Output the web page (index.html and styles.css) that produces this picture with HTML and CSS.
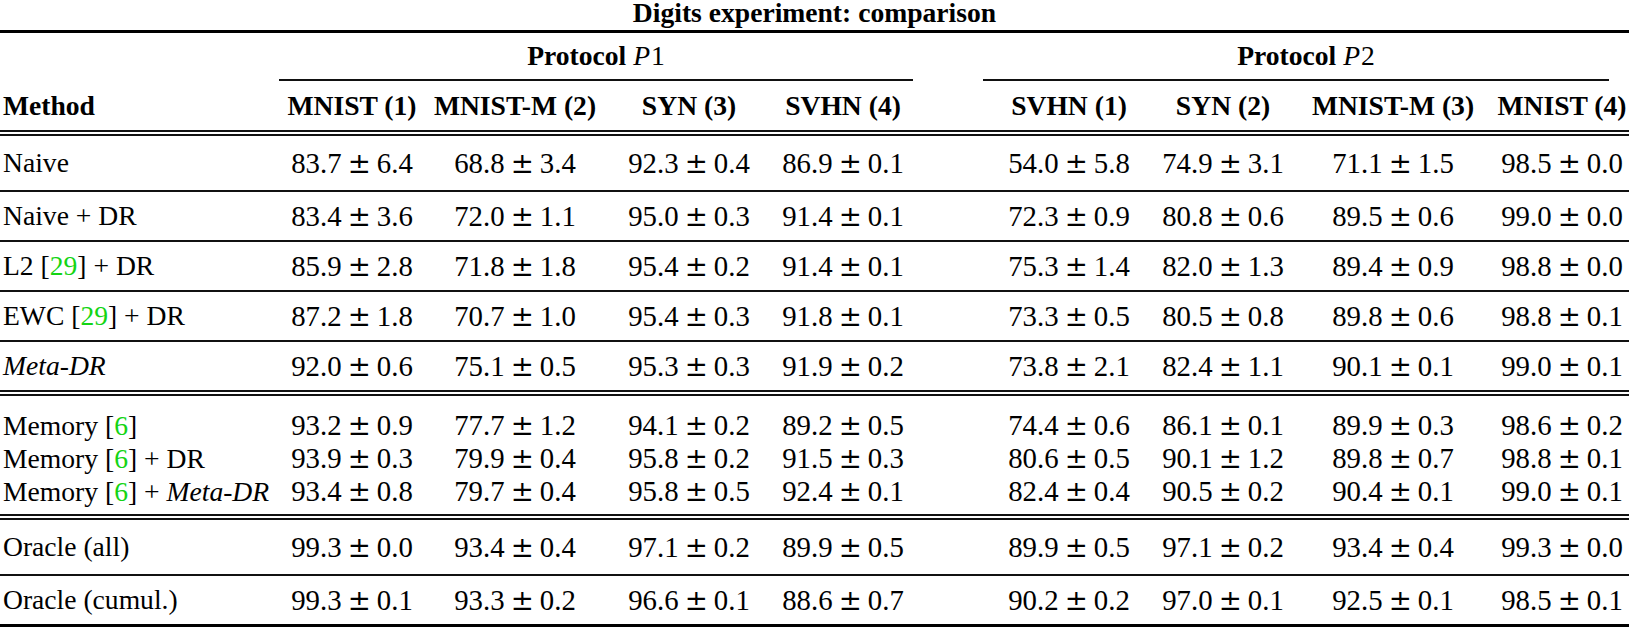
FILE: index.html
```html
<!DOCTYPE html>
<html>
<head>
<meta charset="utf-8">
<link rel="stylesheet" href="styles.css">
</head>
<body>
<div class="tbl">
  <div class="caption">Digits experiment: comparison</div>
  <div class="rule-heavy"></div>

  <div class="row head1">
    <div class="m"></div>
    <div class="grp p1">Protocol&nbsp;<span class="mi">P</span><span class="mn">1</span></div>
    <div class="gap"></div>
    <div class="grp p2">Protocol&nbsp;<span class="mi">P</span><span class="mn">2</span></div>
  </div>

  <div class="row head2">
    <div class="m">Method</div>
    <div>MNIST (1)</div>
    <div>MNIST-M (2)</div>
    <div>SYN (3)</div>
    <div>SVHN (4)</div>
    <div class="gap"></div>
    <div>SVHN (1)</div>
    <div>SYN (2)</div>
    <div>MNIST-M (3)</div>
    <div>MNIST (4)</div>
  </div>

  <div class="dbl"></div>

  <div class="row data tall line">
    <div class="m">Naive</div>
    <div>83.7<span class="pm">±</span>6.4</div>
    <div>68.8<span class="pm">±</span>3.4</div>
    <div>92.3<span class="pm">±</span>0.4</div>
    <div>86.9<span class="pm">±</span>0.1</div>
    <div class="gap"></div>
    <div>54.0<span class="pm">±</span>5.8</div>
    <div>74.9<span class="pm">±</span>3.1</div>
    <div>71.1<span class="pm">±</span>1.5</div>
    <div>98.5<span class="pm">±</span>0.0</div>
  </div>

  <div class="row data line">
    <div class="m">Naive + DR</div>
    <div>83.4<span class="pm">±</span>3.6</div>
    <div>72.0<span class="pm">±</span>1.1</div>
    <div>95.0<span class="pm">±</span>0.3</div>
    <div>91.4<span class="pm">±</span>0.1</div>
    <div class="gap"></div>
    <div>72.3<span class="pm">±</span>0.9</div>
    <div>80.8<span class="pm">±</span>0.6</div>
    <div>89.5<span class="pm">±</span>0.6</div>
    <div>99.0<span class="pm">±</span>0.0</div>
  </div>

  <div class="row data line">
    <div class="m">L2 [<span class="cite">29</span>] + DR</div>
    <div>85.9<span class="pm">±</span>2.8</div>
    <div>71.8<span class="pm">±</span>1.8</div>
    <div>95.4<span class="pm">±</span>0.2</div>
    <div>91.4<span class="pm">±</span>0.1</div>
    <div class="gap"></div>
    <div>75.3<span class="pm">±</span>1.4</div>
    <div>82.0<span class="pm">±</span>1.3</div>
    <div>89.4<span class="pm">±</span>0.9</div>
    <div>98.8<span class="pm">±</span>0.0</div>
  </div>

  <div class="row data line">
    <div class="m">EWC [<span class="cite">29</span>] + DR</div>
    <div>87.2<span class="pm">±</span>1.8</div>
    <div>70.7<span class="pm">±</span>1.0</div>
    <div>95.4<span class="pm">±</span>0.3</div>
    <div>91.8<span class="pm">±</span>0.1</div>
    <div class="gap"></div>
    <div>73.3<span class="pm">±</span>0.5</div>
    <div>80.5<span class="pm">±</span>0.8</div>
    <div>89.8<span class="pm">±</span>0.6</div>
    <div>98.8<span class="pm">±</span>0.1</div>
  </div>

  <div class="row data">
    <div class="m"><i>Meta-DR</i></div>
    <div>92.0<span class="pm">±</span>0.6</div>
    <div>75.1<span class="pm">±</span>0.5</div>
    <div>95.3<span class="pm">±</span>0.3</div>
    <div>91.9<span class="pm">±</span>0.2</div>
    <div class="gap"></div>
    <div>73.8<span class="pm">±</span>2.1</div>
    <div>82.4<span class="pm">±</span>1.1</div>
    <div>90.1<span class="pm">±</span>0.1</div>
    <div>99.0<span class="pm">±</span>0.1</div>
  </div>

  <div class="dbl"></div>

  <div class="group">
    <div class="row data compact">
      <div class="m">Memory [<span class="cite">6</span>]</div>
      <div>93.2<span class="pm">±</span>0.9</div>
      <div>77.7<span class="pm">±</span>1.2</div>
      <div>94.1<span class="pm">±</span>0.2</div>
      <div>89.2<span class="pm">±</span>0.5</div>
      <div class="gap"></div>
      <div>74.4<span class="pm">±</span>0.6</div>
      <div>86.1<span class="pm">±</span>0.1</div>
      <div>89.9<span class="pm">±</span>0.3</div>
      <div>98.6<span class="pm">±</span>0.2</div>
    </div>
    <div class="row data compact">
      <div class="m">Memory [<span class="cite">6</span>] + DR</div>
      <div>93.9<span class="pm">±</span>0.3</div>
      <div>79.9<span class="pm">±</span>0.4</div>
      <div>95.8<span class="pm">±</span>0.2</div>
      <div>91.5<span class="pm">±</span>0.3</div>
      <div class="gap"></div>
      <div>80.6<span class="pm">±</span>0.5</div>
      <div>90.1<span class="pm">±</span>1.2</div>
      <div>89.8<span class="pm">±</span>0.7</div>
      <div>98.8<span class="pm">±</span>0.1</div>
    </div>
    <div class="row data compact">
      <div class="m">Memory [<span class="cite">6</span>] + <i>Meta-DR</i></div>
      <div>93.4<span class="pm">±</span>0.8</div>
      <div>79.7<span class="pm">±</span>0.4</div>
      <div>95.8<span class="pm">±</span>0.5</div>
      <div>92.4<span class="pm">±</span>0.1</div>
      <div class="gap"></div>
      <div>82.4<span class="pm">±</span>0.4</div>
      <div>90.5<span class="pm">±</span>0.2</div>
      <div>90.4<span class="pm">±</span>0.1</div>
      <div>99.0<span class="pm">±</span>0.1</div>
    </div>
  </div>

  <div class="dbl"></div>

  <div class="row data tall line">
    <div class="m">Oracle (all)</div>
    <div>99.3<span class="pm">±</span>0.0</div>
    <div>93.4<span class="pm">±</span>0.4</div>
    <div>97.1<span class="pm">±</span>0.2</div>
    <div>89.9<span class="pm">±</span>0.5</div>
    <div class="gap"></div>
    <div>89.9<span class="pm">±</span>0.5</div>
    <div>97.1<span class="pm">±</span>0.2</div>
    <div>93.4<span class="pm">±</span>0.4</div>
    <div>99.3<span class="pm">±</span>0.0</div>
  </div>

  <div class="row data">
    <div class="m">Oracle (cumul.)</div>
    <div>99.3<span class="pm">±</span>0.1</div>
    <div>93.3<span class="pm">±</span>0.2</div>
    <div>96.6<span class="pm">±</span>0.1</div>
    <div>88.6<span class="pm">±</span>0.7</div>
    <div class="gap"></div>
    <div>90.2<span class="pm">±</span>0.2</div>
    <div>97.0<span class="pm">±</span>0.1</div>
    <div>92.5<span class="pm">±</span>0.1</div>
    <div>98.5<span class="pm">±</span>0.1</div>
  </div>

  <div class="rule-heavy"></div>
</div>
</body>
</html>
```

FILE: styles.css
```css
html, body {
  margin: 0;
  padding: 0;
  background: #ffffff;
}

body {
  font-family: "Liberation Serif", "Times New Roman", serif;
  font-size: 27.6px;
  color: #000000;
}

.tbl {
  width: 1629px;
}

.caption {
  height: 30px;
  line-height: 25px;
  text-align: center;
  font-weight: bold;
  white-space: nowrap;
}

.rule-heavy {
  height: 3px;
  background: #000000;
}

.row {
  display: grid;
  grid-template-columns: 279px 146px 180px 168px 140px 70px 172px 136px 204px 134px;
  align-items: center;
  text-align: center;
  white-space: nowrap;
  box-sizing: border-box;
}

.row > .m {
  text-align: left;
  padding-left: 3px;
}

.head1 {
  height: 48px;
  align-items: stretch;
}

.grp {
  display: flex;
  align-items: center;
  justify-content: center;
  font-weight: bold;
  border-bottom: 2px solid #111111;
}

.p1 {
  grid-column: 2 / 6;
}

.p2 {
  grid-column: 7 / 11;
  margin-right: 20px;
  padding-left: 20px;
}

.mi {
  font-style: italic;
  font-weight: normal;
  margin-right: 0.04em;
}

.mn {
  font-weight: normal;
}

.head2 {
  height: 49px;
  font-weight: bold;
}

.dbl {
  height: 6px;
  box-sizing: border-box;
  border-top: 2px solid #111111;
  border-bottom: 2px solid #111111;
}

.data {
  height: 48px;
}

.data > div:not(.m) {
  font-size: 28.8px;
}

.data.line {
  height: 50px;
  border-bottom: 2px solid #111111;
}

.data.tall {
  height: 56px;
}

.group {
  padding: 13px 0 6px;
}

.data.compact {
  height: 33px;
}

.pm {
  font-family: "DejaVu Serif", "Liberation Serif", serif;
  font-size: 27.6px;
  margin: 0 0.22em;
}

.cite {
  color: #14d414;
}
```
